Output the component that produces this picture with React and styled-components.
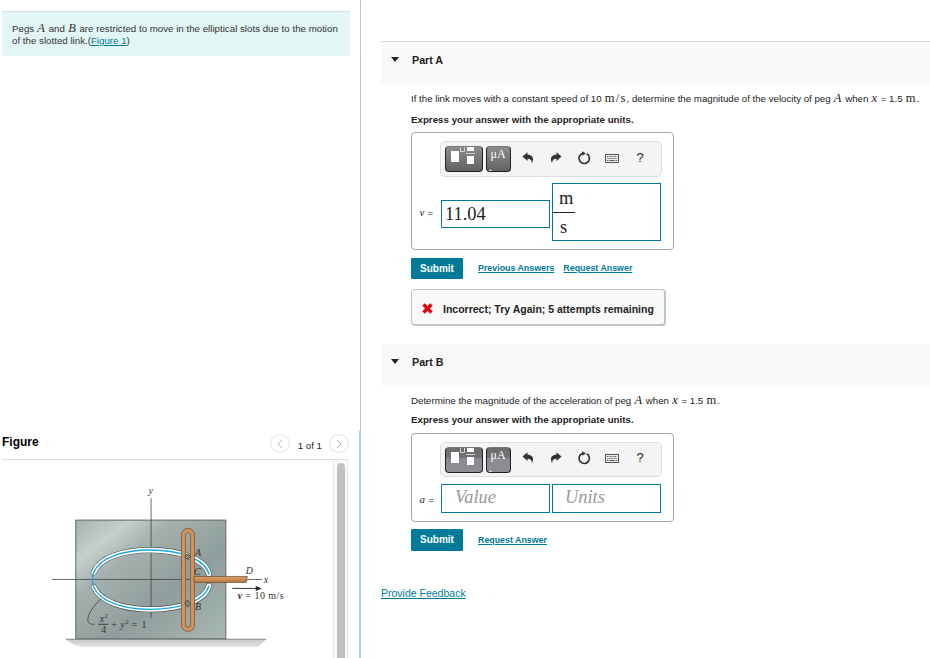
import React from 'react';
import styled, { createGlobalStyle } from 'styled-components';

const GlobalStyle = createGlobalStyle`
  * {
    box-sizing: border-box;
  }
  body {
    margin: 0;
    background: #fff;
    color: #222;
    font-family: 'Liberation Sans', Arial, sans-serif;
    font-size: 9.7px;
    overflow: hidden;
  }
`;

const Page = styled.div`
  display: flex;
  width: 930px;
  height: 658px;
`;

const LeftPane = styled.div`
  display: flex;
  flex-direction: column;
  width: 361px;
  flex: none;
`;

const ProblemPane = styled.div`
  height: 431px;
  padding: 11px 10px 0 2px;
  border-right: 1px solid #b5c9dc;
`;

const ProblemText = styled.div`
  height: 45px;
  padding: 11px 0 0 10px;
  background: #e2f6f5;
  border-top: 1px solid #d8dcdc;
  color: #333;
  letter-spacing: 0.015px;
  line-height: 12px;
  white-space: nowrap;
`;

const Link = styled.a`
  color: #007a99;
  text-decoration: underline;
  font-size: ${(p) => p.$size || 'inherit'};
  font-weight: ${(p) => (p.$bold ? 'bold' : 'normal')};
  cursor: pointer;
`;

const MathText = styled.span`
  padding-left: 0.5px;
  font-family: 'Liberation Serif', 'Times New Roman', serif;
  font-size: ${(p) => p.$size || 12.5}px;
  font-style: ${(p) => (p.$upright ? 'normal' : 'italic')};
  letter-spacing: ${(p) => p.$spacing ?? 1}px;
  line-height: 1px;
`;

const FigurePane = styled.div`
  flex: 1;
  padding: 0 11px 0 2px;
  border-right: 2px solid #b5cbdd;
`;

const FigureHeader = styled.div`
  display: flex;
  align-items: flex-start;
  height: 29px;
  border-bottom: 1px solid #ddd;
`;

const FigureTitle = styled.div`
  flex: 1;
  padding-top: 4px;
  color: #000;
  font-size: 12px;
  font-weight: bold;
  line-height: 14px;
`;

const Pager = styled.div`
  display: flex;
  align-items: center;
  gap: 7px;
  margin-right: -1px;
  padding-top: 3px;
`;

const PagerButton = styled.button`
  display: flex;
  align-items: center;
  justify-content: center;
  width: 20px;
  height: 19px;
  padding: 0;
  background: #fff;
  border: 1px solid #e2e2e2;
  border-radius: 50%;
`;

const PagerLabel = styled.span`
  padding: 3px 0 0 1px;
  font-size: 9.7px;
`;

const FigureBody = styled.div`
  display: flex;
  height: 198px;
`;

const ScrollTrack = styled.div`
  display: flex;
  justify-content: center;
  width: 15px;
  padding: 3px 0 0 1px;
  background: #fafafa;
  border: solid #e6e6e6;
  border-width: 0 1px;
`;

const ScrollThumb = styled.div`
  width: 8px;
  background: #c1c1c1;
  border-radius: 4px 4px 0 0;
`;

const RightPane = styled.div`
  flex: 1;
  min-width: 0;
  padding: 41px 0 0 20px;
`;

const PartHeader = styled.div`
  display: flex;
  align-items: flex-start;
  gap: 13px;
  height: ${(p) => (p.$line ? 43 : 42)}px;
  padding: 12px 0 0 10px;
  background: #f9f9f9;
  border-top: ${(p) => (p.$line ? '1px solid #ddd' : 'none')};
  font-size: 10.7px;
  font-weight: bold;
  line-height: 13px;
`;

const Caret = styled.span`
  width: 0;
  height: 0;
  margin-top: 3px;
  border: solid transparent;
  border-width: 5px 4px 0;
  border-top-color: #222;
`;

const PartBody = styled.div`
  padding: 9px 0 0 30px;
`;

const Question = styled.div`
  height: 12px;
  line-height: 12px;
  white-space: nowrap;
`;

const Instruction = styled.div`
  margin-top: ${(p) => p.$gap}px;
  font-weight: bold;
  letter-spacing: 0.03px;
  line-height: 12px;
  white-space: nowrap;
`;

const AnswerBox = styled.div`
  width: 263px;
  height: ${(p) => p.$height}px;
  margin-top: ${(p) => p.$gap}px;
  padding: 8px 0 0 7px;
  border: 1px solid #a5a5a5;
  border-radius: 4px;
`;

const Toolbar = styled.div`
  display: flex;
  align-items: center;
  width: 222px;
  height: ${(p) => p.$height}px;
  margin-left: 21px;
  padding-left: 4px;
  background: #f4f4f4;
  border: 1px solid #ddd;
  border-radius: 5px;
`;

const ToolButton = styled.button`
  flex: none;
  width: ${(p) => p.$width}px;
  height: 26px;
  margin-right: 3px;
  padding: 0;
  overflow: hidden;
  background: ${(p) =>
    p.$split
      ? 'linear-gradient(#6c6c6f 0%, #737376 42%, #89898f 43%, #8e8e94 100%)'
      : 'linear-gradient(#8c8c90, #626264)'};
  border: 1px solid #222;
  border-top-color: #777;
  border-radius: 4px;

  svg {
    display: block;
  }
`;

const ToolIcons = styled.div`
  display: grid;
  grid-template-columns: repeat(5, 28px);
  align-items: center;
  justify-items: center;
  height: 24px;
  padding-bottom: ${(p) => (p.$raised ? 4 : 2)}px;
`;

const HelpMark = styled.span`
  font-size: 13px;
  line-height: 14px;
`;

const InputRow = styled.div`
  display: flex;
  align-items: center;
  gap: 2px;
  margin-top: ${(p) => p.$gap}px;
`;

const VarLabel = styled.span`
  width: 20px;
  padding: 1px 0 0;
  white-space: nowrap;
`;

const Field = styled.div`
  display: flex;
  flex-direction: column;
  align-items: flex-start;
  justify-content: center;
  width: 109px;
  height: ${(p) => p.$height}px;
  margin-top: ${(p) => p.$drop || 0}px;
  padding-left: ${(p) => p.$indent}px;
  border: 1px solid #007a99;
  color: ${(p) => (p.$placeholder ? '#999' : '#222')};
  font-family: 'Liberation Serif', 'Times New Roman', serif;
  font-size: 18.4px;
  font-style: ${(p) => (p.$placeholder ? 'italic' : 'normal')};
  line-height: ${(p) => (p.$placeholder ? 21 : 22)}px;
  padding-bottom: ${(p) => (p.$placeholder ? 2 : 0)}px;
`;

const Fraction = styled.div`
  display: grid;
  grid-template-rows: 28px 28px;
  align-items: center;
  width: 22px;
  padding-left: 6px;
  background: linear-gradient(#222, #222) 0 28px / 22px 1px no-repeat;

  span:last-child {
    padding: 2px 0 0 1px;
  }
`;

const Actions = styled.div`
  display: flex;
  align-items: center;
  margin-top: ${(p) => p.$gap}px;
`;

const Submit = styled.button`
  width: 52px;
  height: ${(p) => p.$height}px;
  margin-right: 15px;
  padding: 0 0 1px;
  background: #007a99;
  border: none;
  border-radius: 1px;
  color: #fff;
  font: bold 10px 'Liberation Sans', Arial, sans-serif;
`;

const ActionLinks = styled.div`
  display: flex;
  gap: 9px;
  padding-bottom: 1px;
`;

const Feedback = styled.div`
  display: flex;
  align-items: center;
  gap: 10px;
  width: 255px;
  height: 37px;
  margin: 10px 0 18px;
  padding: 3px 0 0 10px;
  background: #fafafa;
  border: 1px solid #c4c4c4;
  border-right-width: 2px;
  border-bottom-width: 2px;
  border-radius: 4px;
  font-size: 10.5px;
  font-weight: bold;
  white-space: nowrap;
`;

const Footer = styled.div`
  margin-top: 36px;
  line-height: 13px;
`;

function Chevron({ right }) {
  return (
    <svg width="6" height="10" viewBox="0 0 6 10" fill="none" stroke="#b5b5b5">
      <path d={right ? 'M1 1l4 4-4 4' : 'M5 1L1 5l4 4'} />
    </svg>
  );
}

function MathToolbar({ height, split }) {
  return (
    <Toolbar $height={height}>
      <ToolButton $width={38} $split={split}>
        <svg width="36" height="24" viewBox="0 0 36 24">
          <rect x="5" y="4" width="8" height="11" fill="#fff" />
          <path d="M14.500 0v4.500h4V0" fill="none" stroke="#d2d2d2" />
          <rect x="21" y="0" width="7" height="4" fill="#fff" />
          <path d="M20 6.500h9" stroke="#ccc" />
          <rect x="21" y="9" width="7" height="8" fill="#fff" />
        </svg>
      </ToolButton>
      <ToolButton $width={25} $split={split}>
        <svg width="23" height="24" viewBox="0 0 23 24">
          <text x="3.500" y="11" fill="#fff" fontFamily="Liberation Serif, serif" fontSize="12">
            μA
          </text>
          <path d="M2 23.500q2-1 3 .5" fill="none" stroke="#fff" />
        </svg>
      </ToolButton>
      <ToolIcons $raised={split}>
        <svg width="12" height="12" viewBox="0 0 12 12" fill="#333">
          <path d="M0.500 4.500L5.500.3v2.400C10.200 2.700 12.700 6 9.800 11.300c.3-3-1.200-4.500-4.300-4.500v2.300z" />
        </svg>
        <svg width="12" height="12" viewBox="0 0 12 12" fill="#333">
          <path d="M11.500 4.500L6.500.3v2.400C1.800 2.700-.7 6 2.200 11.300c-.3-3 1.200-4.500 4.300-4.500v2.300z" />
        </svg>
        <svg width="14" height="14" viewBox="0 0 14 14">
          <path d="M9.800 2.800A5.200 5.200 0 1 1 5.200 2.500" fill="none" stroke="#333" strokeWidth="1.700" />
          <path d="M5 .2l4 2.300-3.800 2.300z" fill="#333" />
        </svg>
        <svg width="14" height="10" viewBox="0 0 14 10">
          <rect x=".5" y="1.500" width="13" height="8" fill="#eee" stroke="#555" />
          <path d="M2 3.500h10M2.500 5.500h9" stroke="#555" strokeDasharray="1 .6" />
          <path d="M2 7.500h1.500M4.500 7.500h5M10.500 7.500h1.500" stroke="#555" />
        </svg>
        <HelpMark>?</HelpMark>
      </ToolIcons>
    </Toolbar>
  );
}

const SLOT_TOP = 'M94 572.500C100 558 122 550 151 550C182 550 206 560 209.500 574';
const SLOT_BOTTOM = 'M94 587C100 601 122 609.500 151 609.500C182 609.500 206 600 209.500 586';

function Mechanism() {
  return (
    <svg width="332" height="198" viewBox="2 460 332 198" fontFamily="Liberation Serif, serif">
      <defs>
        <linearGradient id="plate" x1="0" y1="0" x2="1" y2="1">
          <stop offset="0" stopColor="#a4b2ae" />
          <stop offset="0.18" stopColor="#c5d0cc" />
          <stop offset="0.32" stopColor="#a4b1ae" />
          <stop offset="0.62" stopColor="#8f9d9c" />
          <stop offset="1" stopColor="#aab8b4" />
        </linearGradient>
        <linearGradient id="rod" x1="0" y1="0" x2="0" y2="1">
          <stop offset="0" stopColor="#dca06a" />
          <stop offset="1" stopColor="#b87943" />
        </linearGradient>
        <linearGradient id="ground" x1="0" y1="0" x2="0" y2="1">
          <stop offset="0" stopColor="#c8c8c8" />
          <stop offset="1" stopColor="#e2e2e2" />
        </linearGradient>
      </defs>

      <path d="M66 639.500H267L259 647H82Q73 646 66 639.500z" fill="url(#ground)" />
      <path d="M66 639.500H267" stroke="#888" />
      <rect x="76" y="520" width="150.500" height="119" fill="url(#plate)" stroke="#5d6867" />

      <path d="M151.500 498v120M52 579.500h211" stroke="#444" strokeWidth="0.800" />
      <g fill="none" strokeLinecap="round">
        {[SLOT_TOP, SLOT_BOTTOM].map((d) => (
          <g key={d}>
            <path d={d} stroke="#4c5858" strokeWidth="6" />
            <path d={d} stroke="#fff" strokeWidth="4.800" />
            <path d={d} stroke="#18a9e2" strokeWidth="1.400" />
          </g>
        ))}
        <path d="M94 572.500Q91 580 94 587" stroke="#18a9e2" strokeWidth="1.300" />
      </g>

      <rect x="184" y="530.500" width="9" height="99" rx="4.500" fill="none" stroke="#80502e" strokeWidth="5" />
      <rect x="184" y="530.500" width="9" height="99" rx="4.500" fill="none" stroke="#cf935e" strokeWidth="3.600" />
      <path d="M194.500 576.500H248l-2 6H194.500z" fill="url(#rod)" stroke="#70472a" strokeWidth="0.700" />
      <path d="M246 582.500l2-6v6z" fill="#888" />
      <g fill="#7c9182" stroke="#354239" strokeWidth="0.800">
        <circle cx="188" cy="556.500" r="2.400" />
        <circle cx="188" cy="603.500" r="2.400" />
      </g>

      <path d="M101 599Q88 612 88 620Q88 625 95 624.500" fill="none" stroke="#333" strokeWidth="0.700" />
      <path d="M233 588.500h25" stroke="#222" strokeWidth="0.900" />
      <path d="M256.500 586l6 2.500-6 2.500z" fill="#222" />

      <g fill="#333" fontSize="10" fontStyle="italic">
        <text x="149" y="494">y</text>
        <text x="195.500" y="556">A</text>
        <text x="194.500" y="575">C</text>
        <text x="195.500" y="610">B</text>
        <text x="246.500" y="574">D</text>
        <text x="264.500" y="583">x</text>
        <text x="238.500" y="599" textLength="46" fontStyle="normal">
          <tspan fontStyle="italic" fontWeight="bold">v</tspan> = 10 m/s
        </text>
        <text x="100" y="622">x</text>
        <text x="104.500" y="618" fontSize="7" fontStyle="normal">2</text>
        <text x="101.500" y="633" fontStyle="normal">4</text>
        <text x="111.500" y="628" fontStyle="normal">+</text>
        <text x="120.500" y="628">y</text>
        <text x="125.500" y="624" fontSize="7" fontStyle="normal">2</text>
        <text x="132" y="628" fontStyle="normal">=</text>
        <text x="142" y="628" fontStyle="normal">1</text>
      </g>
      <path d="M98.500 624.500h10" stroke="#222" strokeWidth="0.800" />
    </svg>
  );
}

function App() {
  return (
    <>
      <GlobalStyle />
      <Page>
        <LeftPane>
          <ProblemPane>
            <ProblemText>
              Pegs <MathText>A</MathText> and <MathText>B</MathText> are restricted to move in the
              elliptical slots due to the motion
              <br />
              of the slotted link.(<Link>Figure 1</Link>)
            </ProblemText>
          </ProblemPane>
          <FigurePane>
            <FigureHeader>
              <FigureTitle>Figure</FigureTitle>
              <Pager>
                <PagerButton>
                  <Chevron />
                </PagerButton>
                <PagerLabel>1 of 1</PagerLabel>
                <PagerButton>
                  <Chevron right />
                </PagerButton>
              </Pager>
            </FigureHeader>
            <FigureBody>
              <Mechanism />
              <ScrollTrack>
                <ScrollThumb />
              </ScrollTrack>
            </FigureBody>
          </FigurePane>
        </LeftPane>

        <RightPane>
          <PartHeader $line>
            <Caret />
            Part A
          </PartHeader>
          <PartBody>
            <Question>
              If the link moves with a constant speed of 10{' '}
              <MathText $upright $spacing={1.2}>m/s</MathText>, determine the magnitude of the
              velocity of peg <MathText>A</MathText> when <MathText>x</MathText> = 1.5{' '}
              <MathText $upright>m</MathText>.
            </Question>
            <Instruction $gap={9}>Express your answer with the appropriate units.</Instruction>
            <AnswerBox $height={118} $gap={6}>
              <MathToolbar height={36} />
              <InputRow $gap={6}>
                <VarLabel>
                  <MathText $size={11} $spacing={0.5}>v</MathText> =
                </VarLabel>
                <Field $height={28} $indent={3} $drop={4}>
                  11.04
                </Field>
                <Field $height={58} $indent={0}>
                  <Fraction>
                    <span>m</span>
                    <span>s</span>
                  </Fraction>
                </Field>
              </InputRow>
            </AnswerBox>
            <Actions $gap={8}>
              <Submit $height={21}>Submit</Submit>
              <ActionLinks>
                <Link $bold $size="8.85px">Previous Answers</Link>
                <Link $bold $size="8.85px">Request Answer</Link>
              </ActionLinks>
            </Actions>
            <Feedback>
              <svg width="11" height="11" viewBox="0 0 11 11">
                <path d="M1.500 1.500l8 8M9.500 1.500l-8 8" stroke="#e6000f" strokeWidth="3.300" />
              </svg>
              Incorrect; Try Again; 5 attempts remaining
            </Feedback>
          </PartBody>

          <PartHeader>
            <Caret />
            Part B
          </PartHeader>
          <PartBody>
            <Question>
              Determine the magnitude of the acceleration of peg <MathText>A</MathText> when{' '}
              <MathText>x</MathText> = 1.5 <MathText $upright>m</MathText>.
            </Question>
            <Instruction $gap={7}>Express your answer with the appropriate units.</Instruction>
            <AnswerBox $height={89} $gap={7}>
              <MathToolbar height={35} split />
              <InputRow $gap={7}>
                <VarLabel>
                  <MathText $size={11} $spacing={0.5}>a</MathText> =
                </VarLabel>
                <Field $height={29} $indent={13} $placeholder>
                  Value
                </Field>
                <Field $height={29} $indent={12} $placeholder>
                  Units
                </Field>
              </InputRow>
            </AnswerBox>
            <Actions $gap={7}>
              <Submit $height={22}>Submit</Submit>
              <ActionLinks>
                <Link $bold $size="8.85px">Request Answer</Link>
              </ActionLinks>
            </Actions>
          </PartBody>
          <Footer>
            <Link $size="10.5px">Provide Feedback</Link>
          </Footer>
        </RightPane>
      </Page>
    </>
  );
}

export default App;
